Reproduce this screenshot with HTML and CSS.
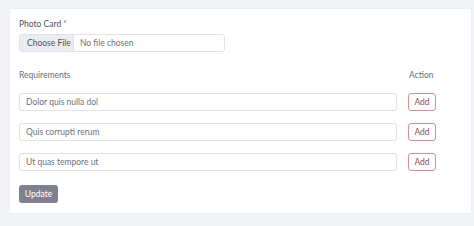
FILE: index.html
```html
<!DOCTYPE html>
<html>
<head>
<meta charset="utf-8">
<link rel="stylesheet" href="styles.css">
</head>
<body>
<div class="card">
  <div class="field-label">Photo Card <span class="req">*</span></div>
  <div class="file-input">
    <span class="file-btn">Choose File</span>
    <span class="file-name">No file chosen</span>
  </div>
  <div class="grid">
    <div class="field-label head">Requirements</div>
    <div class="field-label head action">Action</div>
    <input class="text-input" type="text" value="Dolor quis nulla dol">
    <button class="add-btn">Add</button>
    <input class="text-input" type="text" value="Quis corrupti rerum">
    <button class="add-btn">Add</button>
    <input class="text-input" type="text" value="Ut quas tempore ut">
    <button class="add-btn">Add</button>
  </div>
  <button class="update-btn">Update</button>
</div>
</body>
</html>
```
FILE: styles.css
```css
html, body {
  margin: 0;
  padding: 0;
  background: #f3f4f8;
  font-family: "Lato", "Open Sans", sans-serif;
}
body {
  padding: 8px 2px 0 9px;
}
.card {
  background: #ffffff;
  border: 1px solid #eceef3;
  border-radius: 2px;
  padding: 9px 9px 9px 9px;
  height: 186px;
}
.field-label {
  font-size: 8.5px;
  font-weight: 400;
  color: #4f515e;
  line-height: 12px;
  margin-bottom: 4px;
  white-space: nowrap;
}
.req {
  color: #e74a3b;
}
.file-input {
  display: flex;
  width: 204px;
  height: 16px;
  border: 1px solid #dfe2e8;
  border-radius: 3px;
  overflow: hidden;
  font-size: 8.5px;
  line-height: 16px;
  color: #4f515e;
  white-space: nowrap;
}
.file-btn {
  flex: none;
  background: #eaecf1;
  border-right: 1px solid #dfe2e8;
  padding: 0 7px;
  width: 39px;
}
.file-name {
  padding-left: 6px;
  color: #6e707e;
}
.grid {
  display: grid;
  grid-template-columns: 378px 28px;
  column-gap: 11px;
  row-gap: 12px;
  margin-top: 17px;
}
.grid .head {
  margin-bottom: 0;
  color: #6b6d7a;
}
.action {
  padding-left: 1px;
}
.text-input {
  box-sizing: border-box;
  height: 18px;
  width: 378px;
  border: 1px solid #e0e3e9;
  border-radius: 3px;
  padding: 0 6px;
  margin: 0;
  font-family: inherit;
  font-size: 8.5px;
  color: #6e707e;
  background: #fff;
  outline: none;
}
.add-btn {
  box-sizing: border-box;
  height: 18px;
  width: 28px;
  padding: 0;
  margin: 0;
  border: 1px solid #cf8e93;
  border-radius: 3px;
  background: #fff;
  font-family: inherit;
  font-size: 8.5px;
  color: #8a4f55;
}
.update-btn {
  display: block;
  margin-top: 14px;
  box-sizing: border-box;
  height: 18px;
  width: 39px;
  padding: 0;
  border: none;
  border-radius: 3px;
  background: #7e808f;
  color: #ffffff;
  font-family: inherit;
  font-size: 8.5px;
}
```
